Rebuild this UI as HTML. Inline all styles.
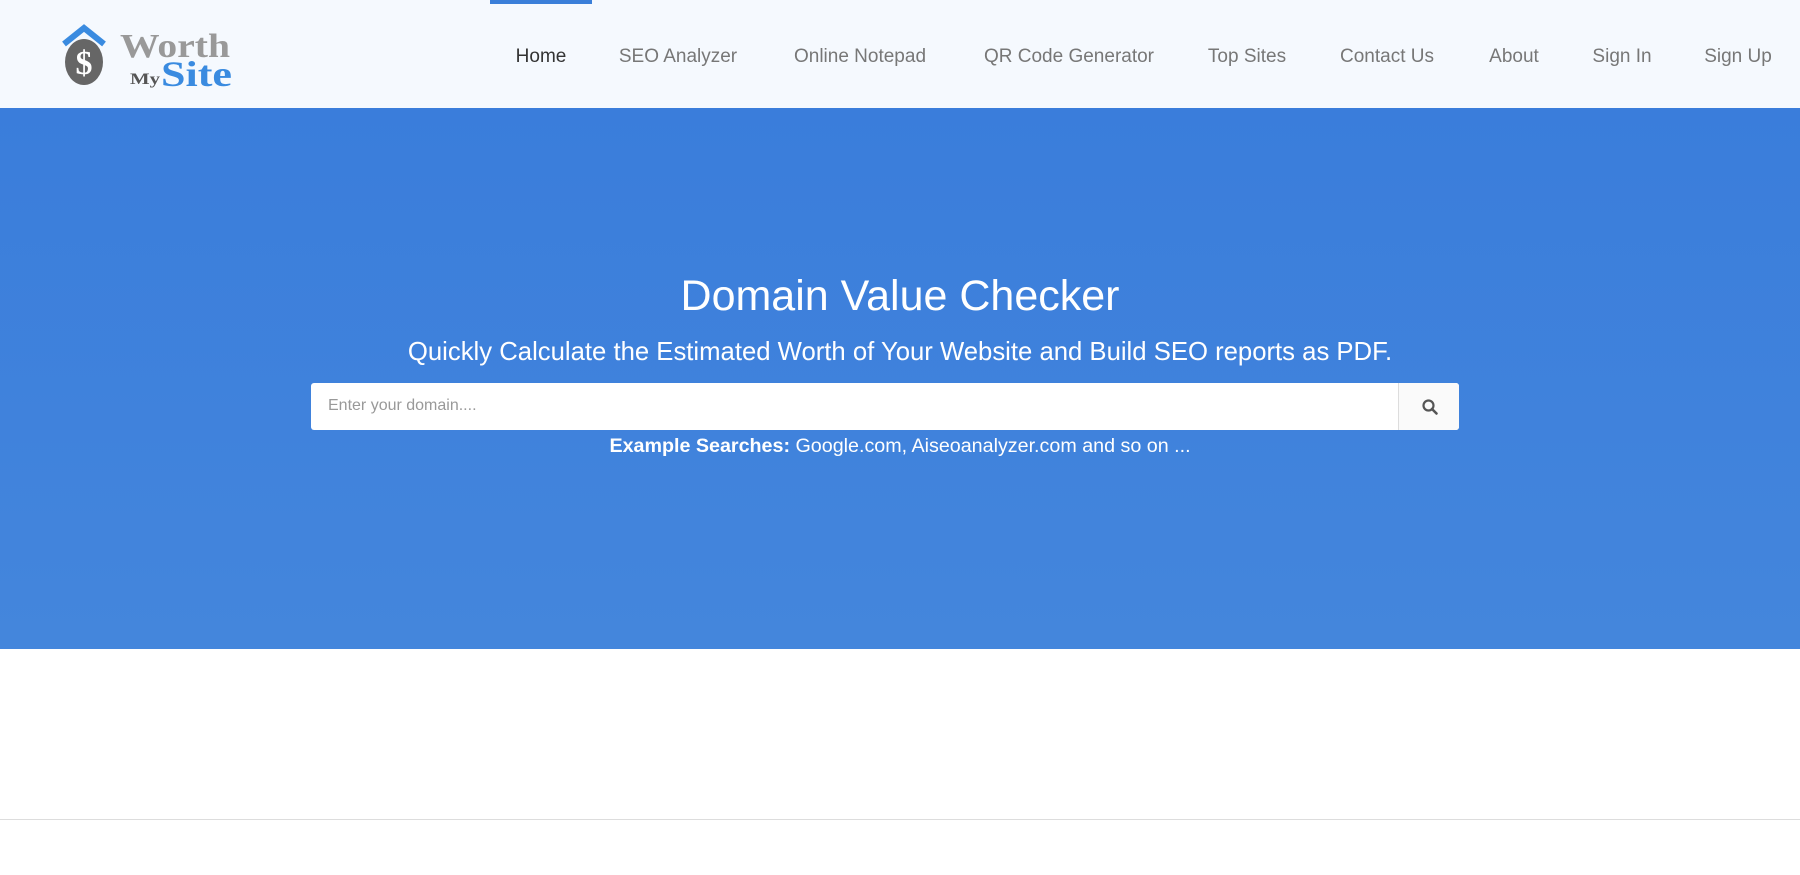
<!DOCTYPE html>
<html><head><meta charset="utf-8"><style>
*{margin:0;padding:0;box-sizing:border-box}
body{width:1800px;height:875px;background:#fff;font-family:"Liberation Sans",sans-serif;position:relative;overflow:hidden}
.hdr{position:absolute;left:0;top:0;width:1800px;height:108px;background:#f5f9fe}
.act{position:absolute;left:490px;top:0;width:102px;height:4px;background:#3a7fd9}
.nav{position:absolute;top:46px;font-size:19px;color:#777;transform:translateX(-50%);white-space:nowrap}
.hero{position:absolute;left:0;top:108px;width:1800px;height:541px;background:linear-gradient(#3a7ddb,#4486dc)}
h1{position:absolute;top:272px;width:1800px;text-align:center;color:#fff;font-weight:normal;font-size:43px}
.sub{position:absolute;top:338px;width:1800px;text-align:center;color:#fff;font-size:25.7px}
.box{position:absolute;left:311px;top:383px;width:1148px;height:47px;background:#fff;border-radius:3px}
.box span{position:absolute;left:17px;top:14px;font-size:16px;color:#999}
.btn{position:absolute;right:0;top:0;width:61px;height:47px;border-left:1px solid #ddd;background:#fafafa;border-radius:0 3px 3px 0}
.ex{position:absolute;top:435px;width:1800px;text-align:center;color:#fff;font-size:19.7px}
.line{position:absolute;left:0;top:819px;width:1800px;height:1px;background:#ddd}
</style></head><body>
<div class="hdr">
<div class="act"></div>
<svg style="position:absolute;left:60px;top:24px" width="180" height="66" viewBox="0 0 180 66">
<path d="M4 20 L24 4 L44 20" fill="none" stroke="#3a8be0" stroke-width="6"/>
<ellipse cx="24" cy="38" rx="19" ry="23" fill="#666"/>
<text x="24" y="50" text-anchor="middle" font-family="Liberation Serif" font-weight="bold" font-size="34" fill="#fff">$</text>
<text x="60" y="33" font-family="Liberation Serif" font-weight="bold" font-size="34" fill="#999" textLength="110" lengthAdjust="spacingAndGlyphs">Worth</text>
<text x="70" y="60" font-family="Liberation Serif" font-weight="bold" font-size="16" fill="#555" textLength="30" lengthAdjust="spacingAndGlyphs">My</text>
<text x="101" y="62" font-family="Liberation Serif" font-weight="bold" font-size="36" fill="#3a8be0" textLength="71" lengthAdjust="spacingAndGlyphs">Site</text>
</svg>
<div class="nav" style="left:541px;color:#333">Home</div>
<div class="nav" style="left:678px">SEO Analyzer</div>
<div class="nav" style="left:860px">Online Notepad</div>
<div class="nav" style="left:1069px">QR Code Generator</div>
<div class="nav" style="left:1247px">Top Sites</div>
<div class="nav" style="left:1387px">Contact Us</div>
<div class="nav" style="left:1514px">About</div>
<div class="nav" style="left:1622px">Sign In</div>
<div class="nav" style="left:1738px">Sign Up</div>
</div>
<div class="hero"></div>
<h1>Domain Value Checker</h1>
<div class="sub">Quickly Calculate the Estimated Worth of Your Website and Build SEO reports as PDF.</div>
<div class="box"><span>Enter your domain....</span><div class="btn">
<svg style="position:absolute;left:22px;top:15px" width="18" height="18" viewBox="0 0 18 18"><circle cx="7.5" cy="7.5" r="5" fill="none" stroke="#555" stroke-width="2.2"/><path d="M11 11 L15.5 15.5" stroke="#555" stroke-width="2.6" stroke-linecap="round"/></svg>
</div></div>
<div class="ex"><b>Example Searches:</b> Google.com, Aiseoanalyzer.com and so on ...</div>
<div class="line"></div>
</body></html>
